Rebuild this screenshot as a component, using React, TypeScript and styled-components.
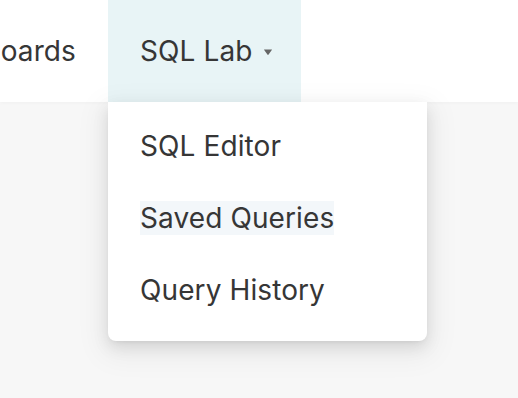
import React from 'react';
import styled, { createGlobalStyle } from 'styled-components';

const GlobalStyle = createGlobalStyle`
	html, body {
		margin: 0;
		padding: 0;
		background-color: #f7f7f7;
		font-family: Inter, "Noto Sans", sans-serif;
		overflow: hidden;
	}
`;

const Page = styled.div`
	width: 518px;
	height: 398px;
	position: relative;
	background-color: #f7f7f7;
`;

const HeaderBar = styled.header`
	background-color: #ffffff;
	height: 102px;
	display: flex;
	flex-direction: row;
	align-items: stretch;
	box-shadow: 0 1px 4px rgba(0, 0, 0, 0.03);
	position: relative;
	z-index: 1;
`;

const NavItem = styled.div<{ $active?: boolean; $clipped?: boolean }>`
	position: relative;
	display: flex;
	align-items: center;
	justify-content: ${(p) => (p.$clipped ? 'flex-end' : 'flex-start')};
	flex: ${(p) => (p.$clipped ? '0 0 108px' : '0 0 auto')};
	box-sizing: border-box;
	padding: ${(p) => (p.$active ? '0 28px 0 32px' : '0 32px')};
	overflow: ${(p) => (p.$clipped ? 'hidden' : 'visible')};
	white-space: nowrap;
	background-color: ${(p) => (p.$active ? '#e8f4f6' : 'transparent')};
	color: #363636;
	font-size: 28px;
	letter-spacing: 0.1px;
`;

const Caret = styled.svg`
	margin-left: 11px;
	width: 10px;
	height: 7px;
	margin-top: 2px;
`;

const Dropdown = styled.div`
	position: absolute;
	top: 102px;
	left: 108px;
	width: 319px;
	box-sizing: border-box;
	padding: 8px 0 15px;
	background-color: #ffffff;
	border-radius: 0 0 8px 8px;
	box-shadow: 0 6px 16px rgba(0, 0, 0, 0.1), 0 3px 6px -4px rgba(0, 0, 0, 0.12),
		0 9px 28px 8px rgba(0, 0, 0, 0.05);
	display: flex;
	flex-direction: column;
	z-index: 2;
`;

const MenuRow = styled.div`
	height: 72px;
	display: flex;
	align-items: center;
	padding: 0 32px;
`;

const MenuLabel = styled.span<{ $hover?: boolean }>`
	font-size: 28px;
	line-height: 34px;
	color: #363636;
	letter-spacing: 0.1px;
	background-color: ${(p) => (p.$hover ? '#f3f7fa' : 'transparent')};
`;

const menuItems = [
	{ label: 'SQL Editor' },
	{ label: 'Saved Queries', hover: true },
	{ label: 'Query History' },
];

export default function App() {
	return (
		<>
			<GlobalStyle />
			<Page>
				<HeaderBar>
					<NavItem $clipped>Dashboards</NavItem>
					<NavItem $active>
						SQL Lab
						<Caret viewBox="0 0 10 7">
							<path d="M1.2 1 Q0.6 0.5 1.4 0.5 H8.6 Q9.4 0.5 8.8 1 L5.6 5.6 Q5 6.3 4.4 5.6 Z" fill="#666666" />
						</Caret>
					</NavItem>
				</HeaderBar>
				<Dropdown>
					{menuItems.map((item) => (
						<MenuRow key={item.label}>
							<MenuLabel $hover={item.hover}>{item.label}</MenuLabel>
						</MenuRow>
					))}
				</Dropdown>
			</Page>
		</>
	);
}
